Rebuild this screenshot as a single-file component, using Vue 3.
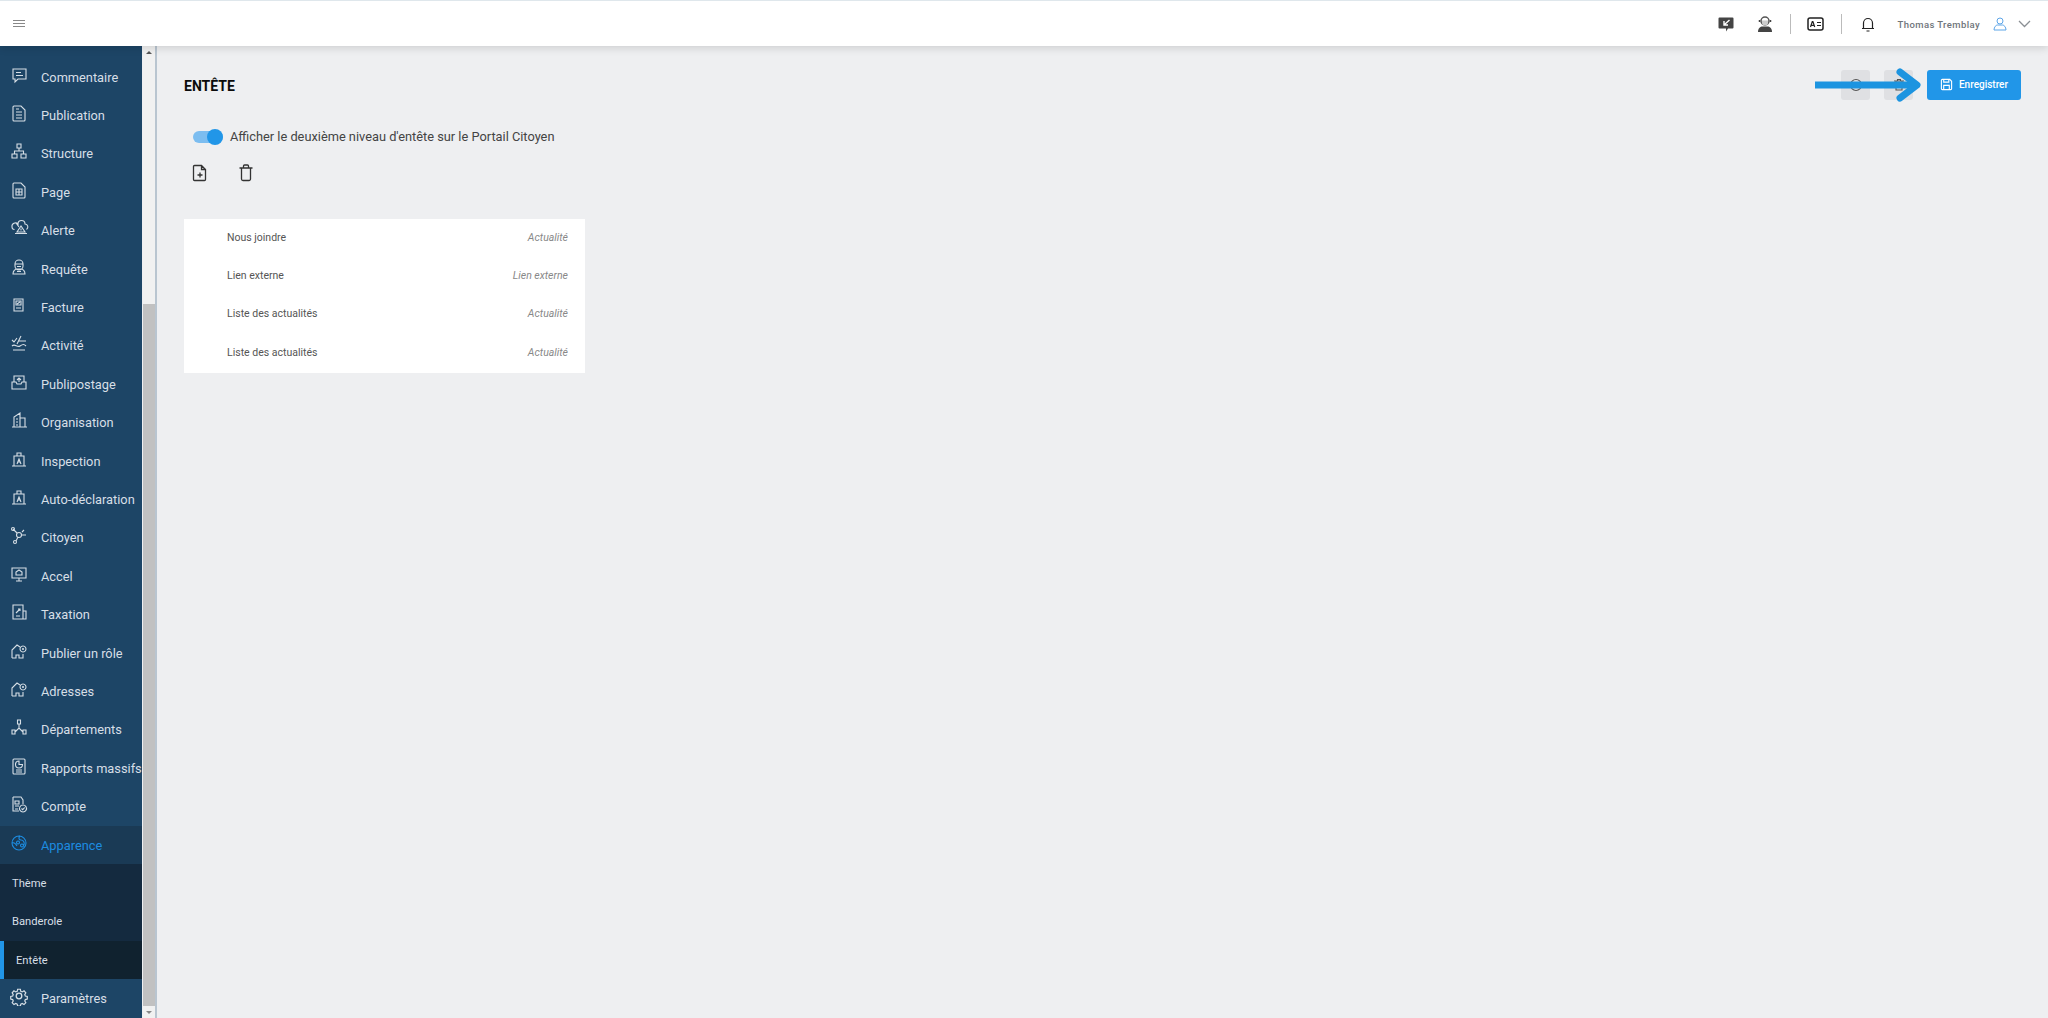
<script setup>
const menu = [
  { label: 'Commentaire', icon: 'M4 4h13v10H9l-3 3v-3H4zM7 7.500h5M7 10.500h7' },
  { label: 'Publication', icon: 'M5 3h7l4 4v10a1 1 0 0 1-1 1H5a1 1 0 0 1-1-1V4a1 1 0 0 1 1-1zM7 9h6M7 12h6M7 15h6M7 6h3' },
  { label: 'Structure', icon: 'M8 3h4v4H8zM3 13h5v4H3zM12 13h5v4h-5zM10 7v3M5.500 13v-3h9v3' },
  { label: 'Page', icon: 'M5 3h7l4 4v10a1 1 0 0 1-1 1H5a1 1 0 0 1-1-1V4a1 1 0 0 1 1-1zM7 9h6v6H7zM10 9v6M7 12h6' },
  { label: 'Alerte', icon: 'M3 9a3.500 3.500 0 0 1 6-3 3.500 3.500 0 0 1 7 0 3 3 0 0 1 1.500 5.500M3 9c0 1.500 1 2.500 2.500 2.500M7 5l3 4M12 8l-4 6h8zM12 10.500v2M6 15.500h12' },
  { label: 'Requête', icon: 'M10 3a4 4 0 0 1 4 4v2a4 4 0 0 1-8 0V7a4 4 0 0 1 4-4zM6 7h8M8 9.500h4M4 17c0-3 2-5 4-5h4c2 0 4 2 4 5zM8 14.500h4' },
  { label: 'Facture', icon: 'M5 4h9v12H5zM7 6h5v4H7zM8 9l3-2M7 13h5' },
  { label: 'Activité', icon: 'M3 7l2 2 3-4M9 8h8M3 13c3-3 5 2 8 0s4-2 6 0M4 17h12M12 3l-4 8' },
  { label: 'Publipostage', icon: 'M3 10h4l1 2h4l1-2h4v7H3zM5 10V4h10v6M10 10V6M8 8l2-2 2 2' },
  { label: 'Organisation', icon: 'M3 17h15M5 17V7l6-4v14M11 8h5v9M7 9h2M7 12h2M7 15h2' },
  { label: 'Inspection', icon: 'M3 17h14M5 17V7h10v10M8 7V4h4v3M8 15l2-5 2 5M9 13h2' },
  { label: 'Auto-déclaration', icon: 'M3 17h14M5 17V7h10v10M8 7V4h4v3M8 15l2-5 2 5M9 13h2' },
  { label: 'Citoyen', icon: 'M10 10m-2.500 0a2.500 2.500 0 1 0 5 0a2.500 2.500 0 1 0-5 0M4 4l4 4M7 16l2-4M12.500 10H17M13 7l2-2M4 4m-1.500 0a1.500 1.500 0 1 0 3 0a1.500 1.500 0 1 0-3 0M6 17m-1.500 0a1.500 1.500 0 1 0 3 0a1.500 1.500 0 1 0-3 0' },
  { label: 'Accel', icon: 'M3 4h14v10H3zM7 17h6M10 14v3M7 11V8l3-2 3 2v3z' },
  { label: 'Taxation', icon: 'M4 3h10v14H4zM14 9h3v8h-3M7 11l4-4M9 7h2v2M7 14h4' },
  { label: 'Publier un rôle', icon: 'M3 17V9l5-5 3 2M3 17h4v-3h3v3h4v-4M14 5a3 3 0 1 0 .01 0M14 7v2M13 8h2' },
  { label: 'Adresses', icon: 'M3 17V9l5-5 3 2M3 17h4v-3h3v3h4v-4M14 5a3 3 0 1 0 .01 0M14 7v2M13 8h2' },
  { label: 'Départements', icon: 'M8.500 3h3v4h-3zM3 13h3v4H3zM14 13h3v4h-3zM10 7v4M6 15l4-4 4 4' },
  { label: 'Rapports massifs', icon: 'M5 3h10a1 1 0 0 1 1 1v13a1 1 0 0 1-1 1H5a1 1 0 0 1-1-1V4a1 1 0 0 1 1-1zM10 5a3.500 3.500 0 1 0 3.500 3.500H10zM7 14h6M7 16h6' },
  { label: 'Compte', icon: 'M4 3h8l2 3v4M4 3v14h6M6 7h4v3H6zM6 12h4M6 15h3M14 11a3.500 3.500 0 1 0 .01 0M12.500 14.500l1.200 1.200 2-2.200' },
  { label: 'Apparence', active: true, icon: 'M10 3a7 7 0 1 0 0 14 7 7 0 0 0 0-14zM3 10c3-1 4 1 5 3M11 3c-2 2-1 4 1 4s4 2 3 5M9 8a1.500 1.500 0 1 0 .01 0M13 11a1.500 1.500 0 1 0 .01 0' }
]
const subMenu = [
  { label: 'Thème' },
  { label: 'Banderole' },
  { label: 'Entête', current: true }
]
const rows = [
  { name: 'Nous joindre', type: 'Actualité' },
  { name: 'Lien externe', type: 'Lien externe' },
  { name: 'Liste des actualités', type: 'Actualité' },
  { name: 'Liste des actualités', type: 'Actualité' }
]
</script>

<template>
  <div class="app">
    <header class="topbar">
      <div class="burger"><span></span><span></span><span></span></div>
      <div class="top-actions">
        <svg class="ti" width="16" height="16" viewBox="0 0 16 16"><path d="M1.500 1.500h13a1 1 0 0 1 1 1v9a1 1 0 0 1-1 1h-4.500l-2 3v-3H1.500a1 1 0 0 1-1-1v-9a1 1 0 0 1 1-1z" fill="#444"/><path d="M11.500 4l-5 4.500M6 5v4h4" stroke="#fff" stroke-width="1.400" fill="none"/></svg>
        <svg class="ti ti2" width="16" height="18" viewBox="0 0 16 18"><circle cx="8" cy="6" r="4" fill="none" stroke="#555" stroke-width="1.500"/><path d="M5 5.500h6v2a3 3 0 0 1-6 0z" fill="#ccc"/><path d="M1 17c0-4 2.500-5.500 4.500-5.500h5c2 0 4.500 1.500 4.500 5.500z" fill="#444"/><path d="M2.500 7V5M13.500 7V5" stroke="#444" stroke-width="1.500"/></svg>
        <i class="sep"></i>
        <svg class="ti ti3" width="17" height="14" viewBox="0 0 17 14"><rect x="1" y="1" width="15" height="12" rx="2" fill="none" stroke="#222" stroke-width="1.500"/><path d="M3.500 10l1.800-5.500h.6L7.700 10M4.300 8.300h2.600M10 5.500h4M10 8.500h4" fill="none" stroke="#222" stroke-width="1.200"/></svg>
        <i class="sep sep2"></i>
        <svg class="ti ti4" width="14" height="16" viewBox="0 0 14 16"><path d="M1 12.500h12M2.500 12.500V7a4.500 4.500 0 0 1 9 0v5.500M5.500 15h3" fill="none" stroke="#222" stroke-width="1.200"/></svg>
        <span class="user">Thomas Tremblay</span>
        <svg class="ti5" width="14" height="14" viewBox="0 0 14 14"><circle cx="7" cy="4" r="3" fill="none" stroke="#5da5e8" stroke-width="1"/><path d="M1 13c0-3 2-5 3.500-5h5C11 8 13 10 13 13z" fill="none" stroke="#5da5e8" stroke-width="1"/></svg>
        <svg class="ti6" width="13" height="8" viewBox="0 0 13 8"><path d="M1 1l5.500 5.500L12 1" fill="none" stroke="#8a8f94" stroke-width="1.300"/></svg>
      </div>
    </header>

    <div class="body">
      <nav class="sidebar">
        <a v-for="item in menu" :key="item.label" class="item" :class="{ active: item.active }">
          <svg width="20" height="20" viewBox="0 0 20 20"><path :d="item.icon" fill="none" stroke="currentColor" stroke-width="1.100"/></svg>
          <span>{{ item.label }}</span>
        </a>
        <a v-for="sub in subMenu" :key="sub.label" class="sub" :class="{ current: sub.current }">{{ sub.label }}</a>
        <a class="item">
          <svg width="20" height="20" viewBox="0 0 20 20"><circle cx="10" cy="10" r="2.800" fill="none" stroke="currentColor" stroke-width="1.300"/><path d="M8.500 2.500h3l.5 2.300 1.600.7 2-1.200 2 2.200-1.200 2 .6 1.500 2.200.5v3l-2.200.5-.6 1.500 1.200 2-2 2-2-1.200-1.600.7-.5 2.300h-3l-.5-2.300-1.600-.7-2 1.200-2-2 1.200-2-.6-1.500-2.200-.5v-3l2.200-.5.6-1.500-1.200-2 2-2.200 2 1.200 1.600-.7z" transform="translate(1 1) scale(.9)" fill="none" stroke="currentColor" stroke-width="1.300"/></svg>
          <span>Paramètres</span>
        </a>
      </nav>
      <div class="scrollbar">
        <div class="arrow up"></div>
        <div class="thumb"></div>
        <div class="arrow down"></div>
      </div>

      <main class="main">
        <div class="title-row">
          <h1>ENTÊTE</h1>
          <div class="buttons">
            <button class="ghost"><svg width="16" height="16" viewBox="0 0 16 16"><circle cx="8" cy="8" r="5.500" fill="none" stroke="#555" stroke-width="1.100"/></svg></button>
            <button class="ghost"><svg width="16" height="16" viewBox="0 0 16 16"><path d="M3 4h10M5 4v9h6V4M6.500 4V2.500h3V4" fill="none" stroke="#555" stroke-width="1.100"/></svg></button>
            <button class="save">
              <svg width="13" height="13" viewBox="0 0 14 14"><path d="M2.500 1.500h8l2 2v8a1 1 0 0 1-1 1h-9a1 1 0 0 1-1-1v-9a1 1 0 0 1 1-1zM4 1.500v3h5.500v-3M4 12.500V8h6v4.500" fill="none" stroke="#fff" stroke-width="1.200"/></svg>
              Enregistrer
            </button>
          </div>
          <svg class="annot" width="108" height="34" viewBox="0 0 108 34"><path d="M0 13.500h98v7H0z" fill="#1c94e0"/><path d="M85 4l17 13-17 13" fill="none" stroke="#1c94e0" stroke-width="7" stroke-linecap="round" stroke-linejoin="round"/></svg>
        </div>

        <div class="toggle-row">
          <div class="toggle"><i></i></div>
          <span>Afficher le deuxième niveau d'entête sur le Portail Citoyen</span>
        </div>

        <div class="tools">
          <svg width="16" height="18" viewBox="0 0 16 18"><path d="M2.500 1.500h7l4 4v10a1 1 0 0 1-1 1h-10a1 1 0 0 1-1-1v-13a1 1 0 0 1 1-1zM9.500 1.500v4h4M5.500 11h5M8 8.500v5" fill="none" stroke="#333" stroke-width="1.300"/></svg>
          <svg width="16" height="18" viewBox="0 0 16 18"><path d="M1.500 4h13M3.500 4v11a1.500 1.500 0 0 0 1.500 1.500h6a1.500 1.500 0 0 0 1.500-1.500V4M5.500 4V2a1 1 0 0 1 1-1h3a1 1 0 0 1 1 1v2" fill="none" stroke="#333" stroke-width="1.300"/></svg>
        </div>

        <div class="card">
          <div v-for="(row, i) in rows" :key="i" class="row">
            <span class="name">{{ row.name }}</span>
            <em>{{ row.type }}</em>
          </div>
        </div>
      </main>
    </div>
  </div>
</template>

<style>
html, body { margin: 0; background: #eeeff1; }
</style>

<style scoped>
.app {
  height: 1018px;
  display: flex;
  flex-direction: column;
  overflow: hidden;
  font-family: Roboto, "Liberation Sans", sans-serif;
}
.topbar {
  height: 45px;
  flex-shrink: 0;
  border-top: 1px solid #dfe7ec;
  background: #fff;
  display: flex;
  align-items: center;
  justify-content: space-between;
  box-shadow: 0 2px 8px rgba(0, 0, 0, .14);
  position: relative;
  z-index: 2;
}
.burger {
  margin-left: 13px;
  display: flex;
  flex-direction: column;
  gap: 2px;
}
.burger span {
  display: block;
  width: 12px;
  height: 1px;
  background: #888;
}
.top-actions {
  display: flex;
  align-items: center;
  padding-right: 17px;
  padding-top: 1px;
}
.ti2 { margin-left: 23px; }
.sep {
  width: 1px;
  height: 20px;
  background: #bbb;
  margin: 0 16px 0 17px;
}
.sep2 { margin-left: 17px; margin-right: 19px; }
.ti4 { margin-right: 23px; }
.user {
  font-size: 9.500px;
  font-weight: 500;
  letter-spacing: .4px;
  color: #6f757b;
}
.ti5 { margin-left: 13px; }
.ti6 { margin-left: 11px; }
.body {
  flex: 1;
  display: flex;
  min-height: 0;
}
.sidebar {
  width: 142px;
  flex-shrink: 0;
  background: #1d4566;
  padding-top: 12px;
  overflow: hidden;
  box-sizing: border-box;
}
.item, .sub {
  height: 38.400px;
  display: flex;
  align-items: center;
  white-space: nowrap;
  font-size: 12.800px;
  color: #d7dfe6;
}
.item { padding-left: 9px; }
.item svg {
  flex-shrink: 0;
  margin: -5px 12px 0 0;
}
.item.active {
  background: #1a3a55;
  color: #1d8ce0;
}
.sub {
  background: #142a3f;
  padding-left: 12px;
  font-size: 11.200px;
}
.sub.current {
  background: #10222f;
  border-left: 4px solid #2196e8;
  padding-left: 12px;
}
.scrollbar {
  width: 12px;
  flex-shrink: 0;
  margin-left: 1px;
  background: #f1f1f1;
  border-right: 2px solid #b9c5d0;
  display: flex;
  flex-direction: column;
  justify-content: space-between;
}
.arrow {
  height: 12px;
  display: flex;
  justify-content: center;
  align-items: center;
}
.arrow::before {
  content: "";
  border-left: 3px solid transparent;
  border-right: 3px solid transparent;
}
.up::before { border-bottom: 3px solid #555; }
.down::before { border-top: 3px solid #888; }
.thumb {
  height: 702px;
  margin-top: auto;
  background: #c1c1c1;
}
.main {
  flex: 1;
  padding: 0 27px;
  min-width: 0;
}
.title-row {
  height: 78px;
  display: flex;
  align-items: center;
  justify-content: space-between;
  position: relative;
}
h1 {
  margin: 1px 0 0;
  font-size: 14px;
  font-weight: 700;
  color: #0b0b0b;
}
.buttons {
  display: flex;
  gap: 14px;
  margin-top: -1px;
}
button {
  border: 0;
  height: 30px;
  border-radius: 3px;
  display: flex;
  align-items: center;
  justify-content: center;
  padding: 0;
  font-family: inherit;
}
.ghost {
  width: 29px;
  background: #dfe0e3;
}
.save {
  width: 94px;
  gap: 6px;
  background: #2196e8;
  color: #fff;
  font-size: 10px;
  font-weight: 500;
}
.annot {
  position: absolute;
  right: 98px;
  top: 22px;
}
.toggle-row {
  display: flex;
  align-items: center;
  gap: 7px;
  padding-left: 9px;
  height: 25px;
  font-size: 12.800px;
  color: #444;
}
.toggle {
  width: 30px;
  height: 12px;
  background: #7cbdf0;
  border-radius: 6px;
  position: relative;
}
.toggle i {
  position: absolute;
  right: 0;
  top: -2px;
  width: 16px;
  height: 16px;
  border-radius: 50%;
  background: #2196e8;
}
.tools {
  display: flex;
  gap: 30px;
  padding: 15px 0 0 8px;
  height: 50px;
  box-sizing: border-box;
}
.card {
  width: 401px;
  background: #fff;
  margin-top: 20px;
}
.row {
  height: 38.400px;
  box-sizing: border-box;
  padding: 0 17px 2px 43px;
  display: flex;
  align-items: center;
  justify-content: space-between;
  font-size: 10.500px;
  color: #555;
}
.row em {
  color: #888;
  font-style: italic;
}
</style>
